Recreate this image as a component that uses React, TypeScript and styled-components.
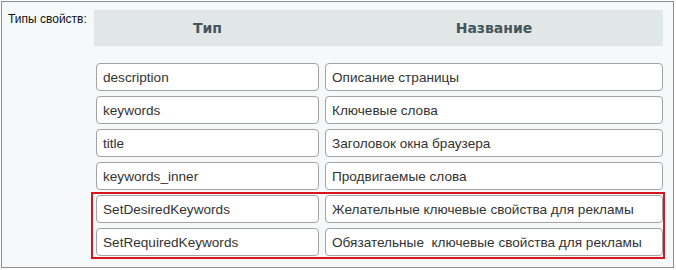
import React from 'react';
import styled, { createGlobalStyle } from 'styled-components';

const GlobalStyle = createGlobalStyle`
  html, body {
    margin: 0;
    padding: 0;
    background: #ffffff;
  }
`;

type PropertyType = { type: string; name: string; required?: boolean };

const properties: PropertyType[] = [
  { type: 'description', name: 'Описание страницы' },
  { type: 'keywords', name: 'Ключевые слова' },
  { type: 'title', name: 'Заголовок окна браузера' },
  { type: 'keywords_inner', name: 'Продвигаемые слова' },
  { type: 'SetDesiredKeywords', name: 'Желательные ключевые свойства для рекламы', required: true },
  { type: 'SetRequiredKeywords', name: 'Обязательные  ключевые свойства для рекламы', required: true },
];

/**
 * Property types editor: label on the left, type / name table on the right.
 */
export default function App() {
  const plain = properties.filter((p) => !p.required);
  const marked = properties.filter((p) => p.required);

  return (
    <>
      <GlobalStyle />
      <Frame>
        <FieldLabel>Типы свойств:</FieldLabel>
        <Table>
          {/*------------ Header -----------*/}
          <HeaderRow>
            <HeaderCell>Тип</HeaderCell>
            <HeaderCell>Название</HeaderCell>
          </HeaderRow>

          {/*------------ Rows -----------*/}
          <Rows>
            {plain.map((p) => (
              <PropertyRow key={p.type} item={p} />
            ))}
            <MarkedGroup>
              {marked.map((p) => (
                <PropertyRow key={p.type} item={p} />
              ))}
            </MarkedGroup>
          </Rows>
        </Table>
      </Frame>
    </>
  );
}

function PropertyRow({ item }: { item: PropertyType }) {
  return (
    <Row>
      <TextField readOnly value={item.type} />
      <TextField readOnly value={item.name} />
    </Row>
  );
}

const Frame = styled.div`
  box-sizing: border-box;
  margin: 1px 0 0 1px;
  width: 673px;
  height: 267px;
  border: 1px solid #8d8d8d;
  background: #f6f9f9;
  display: flex;
  padding: 8px 0 0 6px;
  font-family: 'Liberation Sans', Arial, sans-serif;
`;

const FieldLabel = styled.div`
  width: 86px;
  font-size: 12px;
  line-height: 16px;
  color: #111;
  padding-top: 1px;
  flex-shrink: 0;
`;

const Table = styled.div`
  width: 569px;
  display: flex;
  flex-direction: column;
`;

const HeaderRow = styled.div`
  display: grid;
  grid-template-columns: 223px 338px;
  column-gap: 6px;
  padding: 0 2px;
  height: 36px;
  align-items: center;
  background: #e1e6e7;
`;

const HeaderCell = styled.div`
  text-align: center;
  font-family: 'DejaVu Sans', Verdana, sans-serif;
  font-weight: 700;
  font-size: 14px;
  color: #45555a;
`;

const Rows = styled.div`
  display: flex;
  flex-direction: column;
  gap: 5px;
  margin-top: 17px;
  padding: 0 2px;
`;

const Row = styled.div`
  display: grid;
  grid-template-columns: 223px 338px;
  column-gap: 6px;
`;

const MarkedGroup = styled.div`
  display: flex;
  flex-direction: column;
  gap: 5px;
  border: 2px solid #d8141c;
  padding: 1px 2px 1px 3px;
  margin: -3px -4px -3px -5px;
`;

const TextField = styled.input`
  box-sizing: border-box;
  height: 28px;
  width: 100%;
  margin: 0;
  padding: 0 6px;
  border: 1px solid #a3a3a3;
  border-radius: 4px;
  background: #ffffff;
  font-family: 'Liberation Sans', Arial, sans-serif;
  font-size: 13.6px;
  color: #333;
  outline: none;
`;
